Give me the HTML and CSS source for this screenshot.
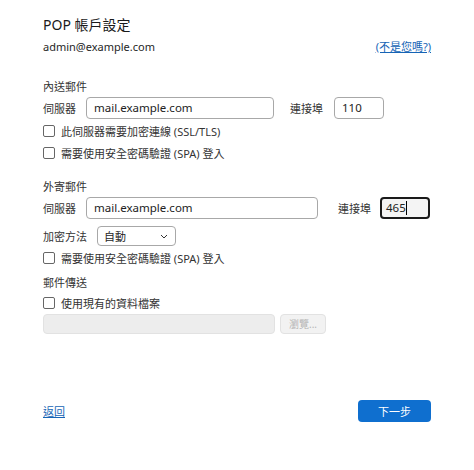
FILE: index.html
```html
<!DOCTYPE html>
<html lang="zh-Hant">
<head>
  <meta charset="UTF-8">
  <meta name="viewport" content="width=device-width, initial-scale=1.0">
  <title>POP 帳戶設定</title>
  <link rel="stylesheet" href="styles.css">
</head>
<body>
  <div class="dialog">
    <h1 class="title">POP 帳戶設定</h1>
    <div class="account">
      <span>admin@example.com</span>
      <a href="#" class="link">(不是您嗎?)</a>
    </div>

    <div class="section first">
      <div class="section-title">內送郵件</div>
      <div class="row">
        <span class="lbl">伺服器</span>
        <span class="field server-in">mail.example.com</span>
        <span class="lbl port-lbl">連接埠</span>
        <span class="field port">110</span>
      </div>
      <div class="check"><span class="box"></span>此伺服器需要加密連線 (SSL/TLS)</div>
      <div class="check"><span class="box"></span>需要使用安全密碼驗證 (SPA) 登入</div>
    </div>

    <div class="section">
      <div class="section-title">外寄郵件</div>
      <div class="row">
        <span class="lbl">伺服器</span>
        <span class="field server-out">mail.example.com</span>
        <span class="lbl port-lbl2">連接埠</span>
        <span class="field port focus">465<span class="caret"></span></span>
      </div>
      <div class="row enc">
        <span class="lbl">加密方法</span>
        <span class="select">自動
          <svg width="8" height="5" viewBox="0 0 8 5"><path d="M1 1l3 3 3-3" fill="none" stroke="#333" stroke-width="1"/></svg>
        </span>
      </div>
      <div class="check"><span class="box"></span>需要使用安全密碼驗證 (SPA) 登入</div>
    </div>

    <div class="section third">
      <div class="section-title">郵件傳送</div>
      <div class="check"><span class="box"></span>使用現有的資料檔案</div>
      <div class="row browse">
        <span class="field disabled"></span>
        <span class="btn-disabled">瀏覽...</span>
      </div>
    </div>

    <div class="footer">
      <a href="#" class="link back">返回</a>
      <button class="next">下一步</button>
    </div>
  </div>
</body>
</html>
```

FILE: styles.css
```css
body {
  margin: 0;
  background: #fff;
  font-family: "Noto Sans", "Noto Sans CJK TC", sans-serif;
  font-size: 11px;
  color: #262626;
}

.dialog {
  width: 388px;
  padding: 14px 0 0 43px;
}

.title {
  margin: 0;
  font-size: 14px;
  font-weight: normal;
  line-height: 22px;
  color: #1a1a1a;
}

.account {
  display: flex;
  justify-content: space-between;
  align-items: center;
  height: 18px;
  margin-top: 1px;
}

.link {
  color: #1664b5;
  text-decoration: underline;
}

.section {
  margin-top: 14px;
}

.section.first {
  margin-top: 23px;
}

.section.third {
  margin-top: 5px;
}

.section-title {
  height: 18px;
  line-height: 18px;
  color: #333;
  font-size: 11px;
}

.row {
  display: flex;
  align-items: center;
  height: 24px;
  line-height: 1;
}

.lbl {
  flex-shrink: 0;
  white-space: nowrap;
  margin-right: 10px;
  color: #333;
  font-size: 11px;
}

.field {
  flex-shrink: 0;
  box-sizing: border-box;
  height: 22px;
  border: 1px solid #a8a8a8;
  border-radius: 4px;
  padding: 0 7px;
  font-size: 11.5px;
  color: #222;
  background: #fff;
  display: flex;
  align-items: center;
}

.server-in {
  width: 188px;
}

.server-out {
  width: 232px;
}

.port-lbl {
  margin-left: 16px;
  margin-right: 11px;
}

.port-lbl2 {
  margin-left: 20px;
  margin-right: 9px;
}

.port {
  width: 50px;
}

.focus {
  border: 2px solid #1a1a1a;
  padding-left: 4px;
  background: #f4f4f4;
}

.caret {
  display: inline-block;
  width: 1px;
  height: 14px;
  background: #000;
}

.enc {
  height: 22px;
  margin-top: 5px;
}

.select {
  box-sizing: border-box;
  width: 79px;
  height: 20px;
  border: 1px solid #a8a8a8;
  border-radius: 4px;
  display: flex;
  align-items: center;
  justify-content: space-between;
  padding: 0 7px 0 6px;
  font-size: 11px;
}

.check {
  display: flex;
  align-items: center;
  height: 22px;
  color: #333;
}

.box {
  box-sizing: border-box;
  width: 12px;
  height: 12px;
  border: 1px solid #666;
  border-radius: 2px;
  margin-right: 6px;
}

.browse {
  height: 20px;
}

.disabled {
  width: 232px;
  height: 20px;
  border-color: #e2e2e2;
  background: #ededed;
}

.btn-disabled {
  box-sizing: border-box;
  width: 46px;
  height: 20px;
  margin-left: 5px;
  border: 1px solid #e2e2e2;
  border-radius: 4px;
  background: #f2f2f2;
  color: #b5b5b5;
  display: flex;
  align-items: center;
  justify-content: center;
  font-size: 10px;
}

.footer {
  display: flex;
  justify-content: space-between;
  align-items: center;
  margin-top: 66px;
}

.back {
  font-size: 11px;
}

.next {
  width: 73px;
  height: 22px;
  border: none;
  border-radius: 4px;
  background: #0f6fcf;
  color: #fff;
  font: inherit;
  font-size: 11px;
}
```
